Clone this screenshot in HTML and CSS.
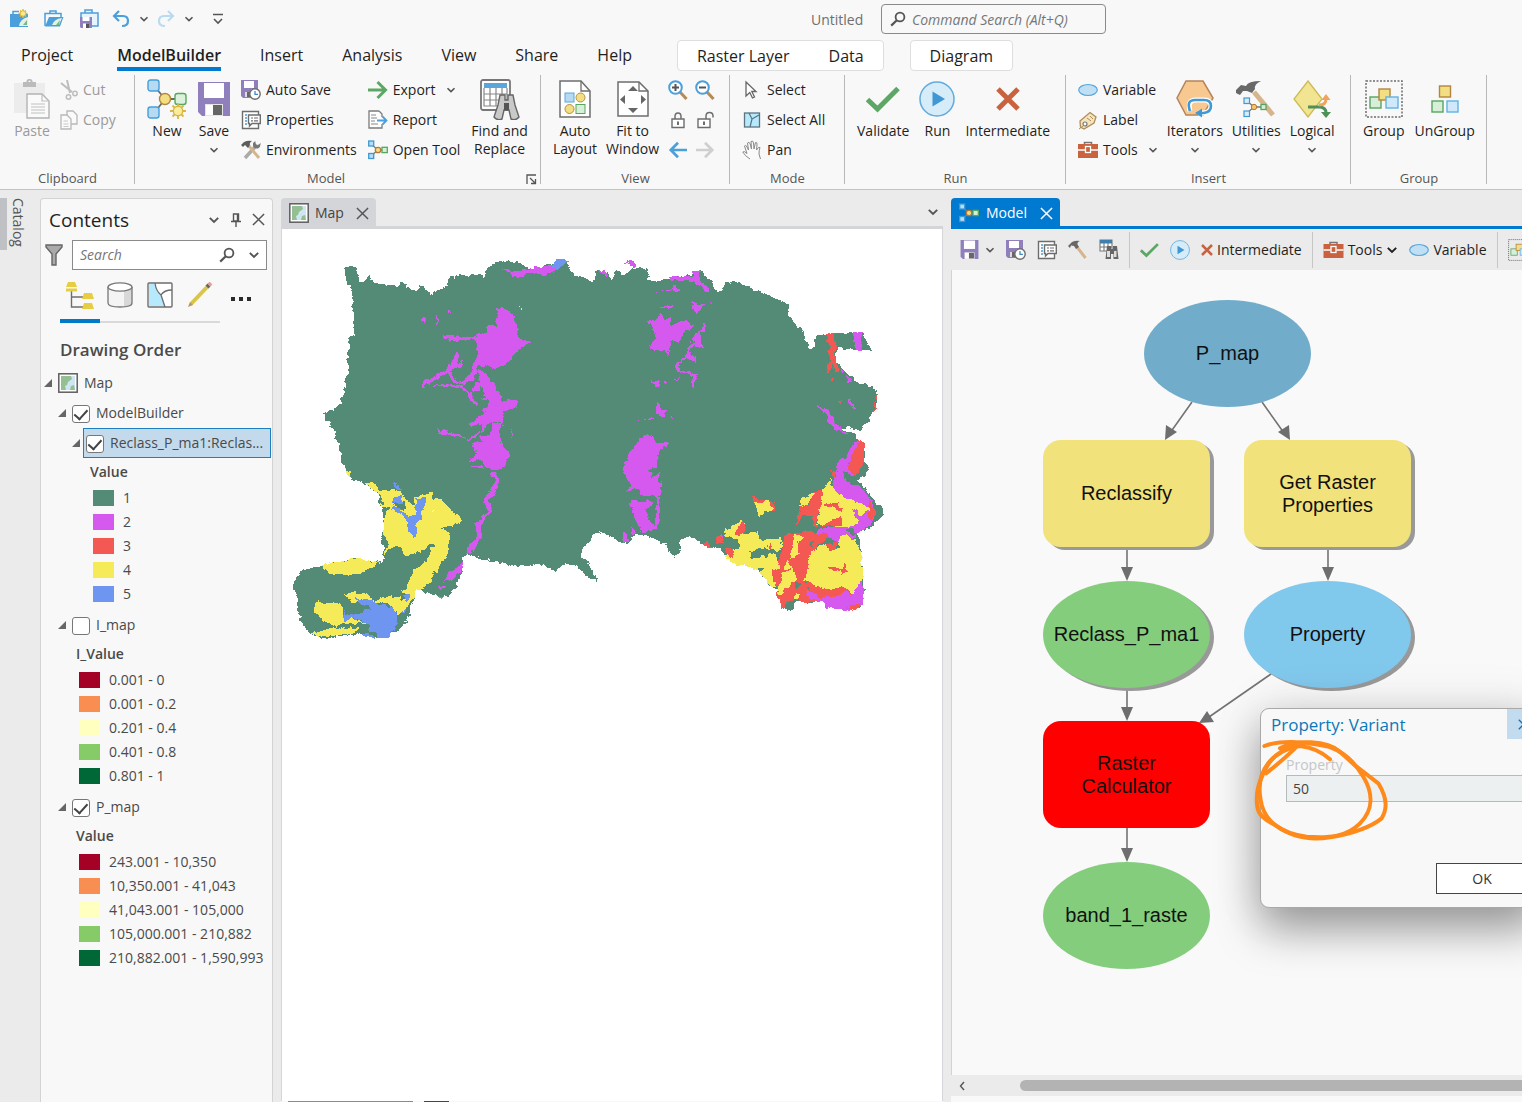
FILE: index.html
```html
<!DOCTYPE html>
<html lang="en">
<head>
<meta charset="utf-8">
<title>Untitled - ModelBuilder</title>
<link rel="stylesheet" href="styles.css">
</head>
<body>
<svg class="sprite" aria-hidden="true">
  <symbol id="chev" viewBox="0 0 10 10"><path d="M1.5 3.2 5 6.6 8.5 3.2" fill="none" stroke="currentColor" stroke-width="1.6"/></symbol>
  <symbol id="close" viewBox="0 0 14 14"><path d="M1 1 13 13M13 1 1 13" fill="none" stroke="currentColor" stroke-width="1.6"/></symbol>
  <symbol id="lens" viewBox="0 0 16 16"><circle cx="10" cy="6" r="4.4" fill="none" stroke="currentColor" stroke-width="1.8"/><path d="M6.8 9.2 1.2 14.6" stroke="currentColor" stroke-width="2.2"/></symbol>
  <symbol id="floppy" viewBox="0 0 32 34"><path d="M0 0H32V34H4L0 30Z" fill="#8f7fbc"/><path d="M6 1H26V16H6Z" fill="#fff"/><path d="M7 22H25V34H7Z" fill="#e4e4e4"/><path d="M8 23H15V33H8Z" fill="#fff"/><path d="M15 23H24V33H15Z" fill="#666"/></symbol>
  <symbol id="autosave" viewBox="0 0 20 20"><path d="M0 0H17V9H10V18H2L0 16Z" fill="#8f7fbc"/><path d="M3 1H13V8H3Z" fill="#fff"/><path d="M4 12H9V17H4Z" fill="#ddd"/><path d="M6 12H9V17H6Z" fill="#666"/><circle cx="14" cy="14" r="5.2" fill="#fff" stroke="#6d6d6d" stroke-width="1.4"/><path d="M14 11V14.4H17" fill="none" stroke="#3f8cc4" stroke-width="1.3"/></symbol>
  <symbol id="props" viewBox="0 0 20 20"><path d="M1.500 1.500H17.500V18.500H1.500Z" fill="#fff" stroke="#6d6d6d" stroke-width="1.400"/><path d="M4 5H6M4 8H6M4 11H6M4 14H6" stroke="#4b9bd0" stroke-width="1.400"/><path d="M7.500 5H19.300V13.500H11L8.500 16V13.500H7.500Z" fill="#fff" stroke="#6d6d6d" stroke-width="1.400"/><path d="M10 8H12M13 8H17M10 10.800H12M13 10.800H17" stroke="#6d6d6d" stroke-width="1.200"/></symbol>
  <symbol id="hammer" viewBox="0 0 20 20"><path d="M9 7 17.500 18" stroke="#d6b58d" stroke-width="3"/><path d="M0 6 4 2Q8 0 12 1 9 2 9.500 4.500L11 7 8 9 6 6 3 5.500 2 8Z" fill="#686868"/></symbol>
  <symbol id="env" viewBox="0 0 20 20"><path d="M4 18 14 7" stroke="#aaa" stroke-width="3.4"/><path d="M12 3 14.500 1Q14 4 16 5 18 5 19.500 3 20 7 17 8.500 13 9 12 6Z" fill="#777"/><path d="M8 6 18 18" stroke="#d6b58d" stroke-width="3"/><path d="M0 5 3 2Q7 0 11 1 8 3 9 5L7 8 4 5 2 7Z" fill="#5d5d5d"/></symbol>
  <symbol id="exportarrow" viewBox="0 0 20 20"><path d="M0 10H17M9.500 2 17.500 10 9.500 18" fill="none" stroke="#5ca765" stroke-width="3"/></symbol>
  <symbol id="report" viewBox="0 0 20 20"><path d="M11 1H1V18H14V14M11 1 14 4V7" fill="#fff" stroke="#7b7b7b" stroke-width="1.3"/><path d="M3 5H8M3 8H9M3 11H7M3 14H10" stroke="#888" stroke-width="1.2"/><path d="M9 10.500H18M14.500 6.500 18.500 10.500 14.500 14.500" fill="none" stroke="#4b9fdb" stroke-width="1.8"/></symbol>
  <symbol id="flow" viewBox="0 0 20 20"><path d="M3 4 10 10 3 16M10 10H16" fill="none" stroke="#777" stroke-width="1.3"/><rect x=".7" y="1" width="5" height="5" fill="#b9dcf4" stroke="#3e99d5" stroke-width="1.3"/><rect x=".7" y="13.500" width="5" height="5" fill="#b9dcf4" stroke="#3e99d5" stroke-width="1.3"/><circle cx="10" cy="10" r="2.700" fill="#f2df84" stroke="#b27a3c" stroke-width="1.300"/><rect x="14" y="7.300" width="5.300" height="5.300" fill="#d7efd8" stroke="#56a560" stroke-width="1.300"/></symbol>
  <symbol id="newmodel" viewBox="0 0 40 40"><path d="M8 8 18 20 8 33M18 20H30" fill="none" stroke="#6a6a6a" stroke-width="1.800"/><rect x="1" y="1" width="11" height="11" rx="2.500" fill="#b7daf3" stroke="#469fd9" stroke-width="1.400"/><rect x="1" y="28" width="11" height="11" rx="2.500" fill="#b7daf3" stroke="#469fd9" stroke-width="1.400"/><circle cx="18" cy="20" r="5.500" fill="#f2df84" stroke="#b5843f" stroke-width="1.400"/><rect x="28" y="14.500" width="11" height="11" rx="2.500" fill="#dcf1dc" stroke="#58a761" stroke-width="1.400"/><path d="M31 24V40M23 32H39M25.500 26.500 36.500 37.500M36.500 26.500 25.500 37.500" stroke="#d8b744" stroke-width="1.800"/><circle cx="31" cy="32" r="4.700" fill="#f9ec9b" stroke="#d8b744" stroke-width="1.400"/></symbol>
  <symbol id="paste" viewBox="0 0 36 40"><path d="M0 4H31V34H0Z" fill="#ececec"/><path d="M9 3H22V8H9Z" fill="#bbb"/><path d="M13 3Q15.500-2 18 3" fill="none" stroke="#bbb" stroke-width="2"/><path d="M13 15H28L35 22V39H13Z" fill="#fafafa" stroke="#b3b3b3" stroke-width="1.400"/><path d="M28 15V22H35M17 25H31M17 28H31M17 31H31M17 34H31" fill="none" stroke="#bfbfbf" stroke-width="1.200"/></symbol>
  <symbol id="cut" viewBox="0 0 18 20"><path d="M1 3 12 12M7 0 10 13" stroke="#bdbdbd" stroke-width="2"/><circle cx="15" cy="13.500" r="2.200" fill="none" stroke="#bdbdbd" stroke-width="1.500"/><circle cx="8.500" cy="17" r="2.200" fill="none" stroke="#bdbdbd" stroke-width="1.500"/></symbol>
  <symbol id="copy" viewBox="0 0 18 20"><path d="M7 1H13L17 5V14H7Z" fill="#fafafa" stroke="#b8b8b8" stroke-width="1.300"/><path d="M1 5H7L11 9V19H1Z" fill="#fafafa" stroke="#b8b8b8" stroke-width="1.300"/><path d="M3.500 11H8M3.500 14H8.500M3.500 16.500H8.500" stroke="#c8c8c8"/></symbol>
  <symbol id="find" viewBox="0 0 40 41"><rect x="1" y="1" width="29" height="30" rx="2" fill="#fff" stroke="#777" stroke-width="1.800"/><path d="M4 4H27V9H4Z" fill="#5aa6da"/><path d="M4 9V27H27V9M4 15H27M4 21H27M10 9V27M16 9V27M22 9V27" fill="none" stroke="#888" stroke-width="1.200"/><path d="M20 16H25V21H28V16H33L35 26 39 38Q36 42 31 40L29 31H24L22 40Q17 42 14 38L18 26Z" fill="#c9c9c9" stroke="#666" stroke-width="1.400"/><path d="M24 24H29V31H24Z" fill="#555"/></symbol>
  <symbol id="findsmall" viewBox="0 0 20 22"><path d="M1 1H13V12H1ZM1 4H13M1 8H13M5 4V12M9 4V12" fill="#fff" stroke="#777" stroke-width="1.100"/><path d="M1 1H13V4H1Z" fill="#3f7fae"/><path d="M8 7H12V10H14V7H18L19.500 20H14.500V15H12V20H6.500Z" fill="#666"/><path d="M8 12H11V18H8ZM15 12H17.500V18H15Z" fill="#ddd"/></symbol>
  <symbol id="autolayout" viewBox="0 0 32 38"><path d="M1 1H22L31 11V37H1Z" fill="#fff" stroke="#6d6d6d" stroke-width="1.500"/><path d="M22 1V11H31" fill="none" stroke="#6d6d6d" stroke-width="1.300"/><rect x="6" y="13" width="9" height="9" fill="#b7daf3" stroke="#5aa6da"/><circle cx="21.500" cy="17.500" r="4.500" fill="#f2df84" stroke="#b98f3e"/><circle cx="10.500" cy="29" r="4.500" fill="#f2df84" stroke="#b98f3e"/><rect x="17" y="24.500" width="9" height="9" fill="#d7efd8" stroke="#56a560"/></symbol>
  <symbol id="fit" viewBox="0 0 32 36"><path d="M1 1H22L31 10V35H1Z" fill="#fff" stroke="#6d6d6d" stroke-width="1.500"/><path d="M22 1V10H31" fill="none" stroke="#6d6d6d" stroke-width="1.300"/><path d="M16 5 21 10H11ZM16 32 21 27H11ZM3 18.500 8 14V23ZM29 18.500 24 14V23Z" fill="#666"/></symbol>
  <symbol id="zoomin" viewBox="0 0 20 20"><path d="M12 12 18.500 19" stroke="#b68a54" stroke-width="3"/><circle cx="7.500" cy="7.500" r="6.300" fill="#fff" stroke="#4b9fdb" stroke-width="2"/><path d="M4 7.500H11M7.500 4V11" stroke="#555" stroke-width="2"/></symbol>
  <symbol id="zoomout" viewBox="0 0 20 20"><path d="M12 12 18.500 19" stroke="#b68a54" stroke-width="3"/><circle cx="7.500" cy="7.500" r="6.300" fill="#fff" stroke="#4b9fdb" stroke-width="2"/><path d="M4 7.500H11" stroke="#555" stroke-width="2"/></symbol>
  <symbol id="lock" viewBox="0 0 20 20"><path d="M7 9V6.500Q7 3 10 3T13 6.500V9" fill="none" stroke="#6d6d6d" stroke-width="1.500"/><path d="M4 9H16V17.500H4Z" fill="#fff" stroke="#6d6d6d" stroke-width="1.400"/><path d="M10 11.500V15" stroke="#6d6d6d" stroke-width="2"/></symbol>
  <symbol id="unlock" viewBox="0 0 20 20"><path d="M11 9V6Q11 2.500 14.500 2.500T18 6V7.500" fill="none" stroke="#6d6d6d" stroke-width="1.500"/><path d="M3 9H15V17.500H3Z" fill="#fff" stroke="#6d6d6d" stroke-width="1.400"/><path d="M9 11.500V15" stroke="#6d6d6d" stroke-width="2"/></symbol>
  <symbol id="back" viewBox="0 0 20 20"><path d="M20 10H2M10 2 2 10 10 18" fill="none" stroke="#4b9fdb" stroke-width="3"/></symbol>
  <symbol id="fwd" viewBox="0 0 20 20"><path d="M0 10H18M10 2 18 10 10 18" fill="none" stroke="#cfcfcf" stroke-width="3"/></symbol>
  <symbol id="cursor" viewBox="0 0 20 20"><path d="M4 2 14 11.500H9.800L12.500 17 10.500 18 7.800 12.500 4 16Z" fill="#fff" stroke="#666" stroke-width="1.300"/></symbol>
  <symbol id="selectall" viewBox="0 0 20 20"><rect x="2.500" y="3" width="15" height="14" fill="#b5e9fb" stroke="#5b7480" stroke-width="1.300"/><path d="M7 3 10 9 8 17M10 9 17 5" fill="none" stroke="#5b7480" stroke-width="1.200"/></symbol>
  <symbol id="hand" viewBox="0 0 20 20"><path d="M8 19Q3 16 .8 12 2 10.500 5 13.500L2.500 6Q3.500 4 5 7L6.500 10 5.500 3Q7 1 8.200 4L9.500 9 9 1.500Q11 0 11.500 3L12 9 13.500 2.500Q15.500 2 15 5L14.500 10Q17 6 18 7.500 17 10 17 14L18.500 19" fill="#fafafa" stroke="#8a8a8a" stroke-width="1"/></symbol>
  <symbol id="tick" viewBox="0 0 34 28"><path d="M1.500 14.500 11.500 24 32 3.500" fill="none" stroke="#5ca765" stroke-width="5"/></symbol>
  <symbol id="run" viewBox="0 0 36 36"><circle cx="18" cy="18" r="17" fill="#d7ecf9" stroke="#62abdc" stroke-width="1.500"/><path d="M13.500 10.500 26 18 13.500 25.500Z" fill="#3f97d3"/></symbol>
  <symbol id="redx" viewBox="0 0 24 24"><path d="M2 2 22 22M22 2 2 22" stroke="#c9633f" stroke-width="5"/></symbol>
  <symbol id="variable" viewBox="0 0 20 20"><ellipse cx="10" cy="10" rx="9.300" ry="5.500" fill="#bfdff4" stroke="#5aa6da" stroke-width="1.200"/></symbol>
  <symbol id="label" viewBox="0 0 20 20"><path d="M2 11 12 2.500 18 7 16 13 6 19 2.500 17Z" fill="#f5e5be" stroke="#b08d5a" stroke-width="1.300"/><circle cx="7" cy="14" r="2" fill="#fff" stroke="#777" stroke-width="1.200"/><path d="M9 8 13 11M12 6 15 9M5 16 1 19" stroke="#b08d5a"/></symbol>
  <symbol id="tools" viewBox="0 0 20 20"><path d="M6.500 5V2.500H13.500V5" fill="none" stroke="#777" stroke-width="1.500"/><path d="M0 4H20V18H0Z" fill="#c9633f"/><path d="M0 10H7M13 10H20" stroke="#fff" stroke-width="1.400"/><rect x="7.500" y="6.500" width="5" height="6" fill="#c9633f" stroke="#fff" stroke-width="1.300"/></symbol>
  <symbol id="iterators" viewBox="0 0 38 38"><path d="M10 1H27L37 18 27 35H10L1 18Z" fill="#f8c891" stroke="#b5845a" stroke-width="1.500"/><path d="M14 31Q11 20 20 20H28Q35 20 35 26T28 33H22" fill="none" stroke="#fff" stroke-width="5"/><path d="M14 31Q10 20 19 20H28Q35 20 35 26T28 33H24" fill="none" stroke="#3e99d5" stroke-width="2.600"/><path d="M19 33 26 28.500V37.500Z" fill="#3e99d5"/></symbol>
  <symbol id="utilities" viewBox="0 0 40 38"><path d="M18 12 37 35" stroke="#d6b58d" stroke-width="5"/><path d="M0 10 5 5 10 6Q12 1 25 1 18 4 19 9L16 13 11 11 7 11 4 15 0 13Z" fill="#686868"/><path d="M11 21 18 27 11 33M18 27H26" fill="none" stroke="#777" stroke-width="1.300"/><rect x="8" y="18" width="5.500" height="5.500" fill="#d7ecf9" stroke="#3e99d5" stroke-width="1.200"/><rect x="8" y="31" width="5.500" height="5.500" fill="#d7ecf9" stroke="#3e99d5" stroke-width="1.200"/><circle cx="18" cy="27" r="2.700" fill="#f2c66b" stroke="#b27a3c"/><rect x="25" y="24.500" width="5" height="5" fill="#d7efd8" stroke="#56a560" stroke-width="1.300"/></symbol>
  <symbol id="logical" viewBox="0 0 38 38"><path d="M15 1 29 19 15 37 1 19Z" fill="#f2e592" stroke="#cdbb55" stroke-width="1.300"/><path d="M15 27H26Q33 27 33 33" fill="none" stroke="#4f8f58" stroke-width="3"/><path d="M28 32H38L33 38Z" fill="#4f8f58"/><path d="M26 25Q33 25 33 19" fill="none" stroke="#f0a35c" stroke-width="3"/><path d="M28.500 20 33 14 37.500 20Z" fill="#f0a35c"/></symbol>
  <symbol id="group" viewBox="0 0 38 38"><rect x="1" y="1" width="36" height="36" fill="none" stroke="#6d6d6d" stroke-width="1.500" stroke-dasharray="2 1.500"/><rect x="5" y="17" width="11" height="11" fill="#d7efd8" stroke="#56a560" stroke-width="1.400"/><rect x="14" y="9" width="11" height="11" fill="#f2df84" stroke="#b5843f" stroke-width="1.400"/><rect x="21" y="17" width="12" height="11" fill="#cfe9fa" stroke="#62b2e0" stroke-width="1.400"/></symbol>
  <symbol id="ungroup" viewBox="0 0 28 28"><rect x="8.500" y="1" width="11" height="11" fill="#f2df84" stroke="#b5843f" stroke-width="1.400"/><rect x="1" y="16" width="11" height="11" fill="#d7efd8" stroke="#56a560" stroke-width="1.400"/><rect x="16" y="16" width="11" height="11" fill="#cfe9fa" stroke="#62b2e0" stroke-width="1.400"/></symbol>
  <symbol id="mapicon" viewBox="0 0 20 20"><rect x=".8" y=".8" width="18.400" height="18.400" fill="#fff" stroke="#5e5e5e" stroke-width="1.500"/><path d="M3 3H17V17H3Z" fill="#cfe6f2"/><path d="M3 3H13L14 6 10 9 9 12 7 13 8 17H3ZM13 13 16 12 17 17H12Z" fill="#93bf93"/></symbol>
  <symbol id="funnel" viewBox="0 0 18 22"><path d="M1 1H17V3L11 10V21H7V10L1 3Z" fill="#aaa" stroke="#666" stroke-width="1.400"/></symbol>
</svg>

<header class="titlebar">
  <div class="qat">
    <button class="icon-btn" aria-label="New project"><svg width="20" height="20" viewBox="0 0 20 20"><path d="M4 5V2.500H10" fill="none" stroke="#4b9fdb" stroke-width="1.500"/><path d="M1 5H19V18H1Z" fill="#4b9fdb"/><path d="M10 17Q11 10 19 8V17Z" fill="#e3f2e3"/><path d="M14 16 18 11V16Z" fill="#76b982"/><path d="M14 0V9M9.500 4.500H18.500M11 1.500 17 7.500M17 1.500 11 7.500" stroke="#dfb73b" stroke-width="1.400"/><circle cx="14" cy="4.500" r="2.800" fill="#f9e88c" stroke="#dfb73b"/></svg></button>
    <button class="icon-btn" aria-label="Open project"><svg width="20" height="20" viewBox="0 0 20 20"><path d="M6 4V2H12V4M1 17V4.500H17V8" fill="none" stroke="#4b9fdb" stroke-width="1.500"/><path d="M1 17.500 5 8H19.500L16 17.500Z" fill="#4b9fdb"/><path d="M8 16Q10 10 18 9L15 16Z" fill="#e3f2e3"/><path d="M12 16 16 11 15 16Z" fill="#76b982"/></svg></button>
    <button class="icon-btn" aria-label="Save project"><svg width="20" height="20" viewBox="0 0 20 20"><path d="M6 4V1H13V4M2 9V4H19V17H13" fill="#e8f4fb" stroke="#4b9fdb" stroke-width="1.500"/><path d="M1 8H13V19H2L1 18Z" fill="#8f7fbc"/><path d="M3.500 8H10.500V12H3.500ZM4 14.500H10V19H4Z" fill="#fff"/><path d="M7 14.500H10V19H7Z" fill="#555"/></svg></button>
    <button class="icon-btn undo" aria-label="Undo"><svg width="18" height="18" viewBox="0 0 18 18"><path d="M7 1 2 6 7 11M2 6H11Q16 6 16 11T10 16" fill="none" stroke="#4b9fdb" stroke-width="2.200"/></svg></button>
    <button class="icon-btn" aria-label="Undo list"><svg width="10" height="10"><use href="#chev"/></svg></button>
    <button class="icon-btn undo" aria-label="Redo"><svg width="18" height="18" viewBox="0 0 18 18"><path d="M11 1 16 6 11 11M16 6H7Q2 6 2 11T8 16" fill="none" stroke="#b9dbf0" stroke-width="2.200"/></svg></button>
    <button class="icon-btn" aria-label="Redo list"><svg width="10" height="10"><use href="#chev"/></svg></button>
    <button class="icon-btn more" aria-label="Customize toolbar"><svg width="12" height="12" viewBox="0 0 12 12"><path d="M1 1.500H11M2 6 6 10 10 6" fill="none" stroke="currentColor" stroke-width="1.600"/></svg></button>
  </div>
  <span class="doc-title">Untitled</span>
  <label class="command-search"><svg width="16" height="16"><use href="#lens"/></svg><input type="text" placeholder="Command Search (Alt+Q)" aria-label="Command Search"></label>
</header>

<nav class="tabs">
  <button class="tab">Project</button>
  <button class="tab active">ModelBuilder</button>
  <button class="tab">Insert</button>
  <button class="tab">Analysis</button>
  <button class="tab">View</button>
  <button class="tab">Share</button>
  <button class="tab">Help</button>
  <div class="context-tabs"><button class="tab">Raster Layer</button><button class="tab">Data</button></div>
  <div class="context-tabs"><button class="tab">Diagram</button></div>
</nav>

<section class="ribbon">
  <div class="group g-clipboard">
    <div class="cmds">
      <button class="big" disabled><span class="ico"><svg width="36" height="40"><use href="#paste"/></svg></span>Paste</button>
      <div class="stack">
        <button class="small" disabled><svg width="18" height="20"><use href="#cut"/></svg>Cut</button>
        <button class="small" disabled><svg width="18" height="20"><use href="#copy"/></svg>Copy</button>
      </div>
    </div>
    <div class="group-name">Clipboard</div>
  </div>
  <div class="group g-model">
    <div class="cmds">
      <button class="big"><span class="ico"><svg width="40" height="40"><use href="#newmodel"/></svg></span>New</button>
      <button class="big"><span class="ico"><svg width="32" height="34"><use href="#floppy"/></svg></span>Save<svg class="drop" width="10" height="10"><use href="#chev"/></svg></button>
      <div class="stack">
        <button class="small"><svg width="20" height="20"><use href="#autosave"/></svg>Auto Save</button>
        <button class="small"><svg width="20" height="20"><use href="#props"/></svg>Properties</button>
        <button class="small"><svg width="20" height="20"><use href="#env"/></svg>Environments</button>
      </div>
      <div class="stack">
        <button class="small"><svg width="20" height="20"><use href="#exportarrow"/></svg>Export<svg class="side" width="10" height="10"><use href="#chev"/></svg></button>
        <button class="small"><svg width="20" height="20"><use href="#report"/></svg>Report</button>
        <button class="small"><svg width="20" height="20"><use href="#flow"/></svg>Open Tool</button>
      </div>
      <button class="big"><span class="ico"><svg width="40" height="41"><use href="#find"/></svg></span>Find and<br>Replace</button>
    </div>
    <div class="group-name">Model</div>
    <button class="launcher" aria-label="Model options"><svg width="11" height="11" viewBox="0 0 11 11"><path d="M1 10V1H10M4 4 9 9M9.500 5V9.500H5" fill="none" stroke="#555" stroke-width="1.300"/></svg></button>
  </div>
  <div class="group g-view">
    <div class="cmds">
      <button class="big"><span class="ico"><svg width="32" height="38"><use href="#autolayout"/></svg></span>Auto<br>Layout</button>
      <button class="big"><span class="ico"><svg width="32" height="36"><use href="#fit"/></svg></span>Fit to<br>Window</button>
      <div class="icon-grid">
        <button class="icon-btn" aria-label="Zoom in"><svg width="20" height="20"><use href="#zoomin"/></svg></button>
        <button class="icon-btn" aria-label="Zoom out"><svg width="20" height="20"><use href="#zoomout"/></svg></button>
        <button class="icon-btn" aria-label="Lock"><svg width="20" height="20"><use href="#lock"/></svg></button>
        <button class="icon-btn" aria-label="Unlock"><svg width="20" height="20"><use href="#unlock"/></svg></button>
        <button class="icon-btn" aria-label="Previous extent"><svg width="20" height="18"><use href="#back"/></svg></button>
        <button class="icon-btn" aria-label="Next extent"><svg width="20" height="18"><use href="#fwd"/></svg></button>
      </div>
    </div>
    <div class="group-name">View</div>
  </div>
  <div class="group g-mode">
    <div class="cmds">
      <div class="stack">
        <button class="small"><svg width="20" height="20"><use href="#cursor"/></svg>Select</button>
        <button class="small"><svg width="20" height="20"><use href="#selectall"/></svg>Select All</button>
        <button class="small"><svg width="20" height="20"><use href="#hand"/></svg>Pan</button>
      </div>
    </div>
    <div class="group-name">Mode</div>
  </div>
  <div class="group g-run">
    <div class="cmds">
      <button class="big"><span class="ico"><svg width="34" height="28"><use href="#tick"/></svg></span>Validate</button>
      <button class="big"><span class="ico"><svg width="36" height="36"><use href="#run"/></svg></span>Run</button>
      <button class="big"><span class="ico"><svg width="24" height="24"><use href="#redx"/></svg></span>Intermediate</button>
    </div>
    <div class="group-name">Run</div>
  </div>
  <div class="group g-insert">
    <div class="cmds">
      <div class="stack">
        <button class="small"><svg width="20" height="20"><use href="#variable"/></svg>Variable</button>
        <button class="small"><svg width="20" height="20"><use href="#label"/></svg>Label</button>
        <button class="small"><svg width="20" height="20"><use href="#tools"/></svg>Tools<svg class="side" width="10" height="10"><use href="#chev"/></svg></button>
      </div>
      <button class="big"><span class="ico"><svg width="38" height="38"><use href="#iterators"/></svg></span>Iterators<svg class="drop" width="10" height="10"><use href="#chev"/></svg></button>
      <button class="big"><span class="ico"><svg width="40" height="38"><use href="#utilities"/></svg></span>Utilities<svg class="drop" width="10" height="10"><use href="#chev"/></svg></button>
      <button class="big"><span class="ico"><svg width="38" height="38"><use href="#logical"/></svg></span>Logical<svg class="drop" width="10" height="10"><use href="#chev"/></svg></button>
    </div>
    <div class="group-name">Insert</div>
  </div>
  <div class="group g-group">
    <div class="cmds">
      <button class="big"><span class="ico"><svg width="38" height="38"><use href="#group"/></svg></span>Group</button>
      <button class="big"><span class="ico"><svg width="28" height="28"><use href="#ungroup"/></svg></span>UnGroup</button>
    </div>
    <div class="group-name">Group</div>
  </div>
</section>

<main class="workspace">
  <aside class="dock"><button class="dock-tab">Catalog</button></aside>

  <section class="contents">
    <header class="pane-title">
      <h2>Contents</h2>
      <button class="icon-btn" aria-label="Pane menu"><svg width="12" height="12"><use href="#chev"/></svg></button>
      <button class="icon-btn" aria-label="Pin"><svg width="10" height="14" viewBox="0 0 10 14"><path d="M2.500 1H7.500V8H2.500ZM0 8.500H10M5 8.500V14M6.500 1V8" fill="none" stroke="currentColor" stroke-width="1.400"/></svg></button>
      <button class="icon-btn" aria-label="Close pane"><svg width="13" height="13"><use href="#close"/></svg></button>
    </header>
    <div class="search-row">
      <svg width="18" height="22"><use href="#funnel"/></svg>
      <label class="search"><input type="text" placeholder="Search" aria-label="Search contents"><svg width="16" height="16"><use href="#lens"/></svg><svg width="12" height="12"><use href="#chev"/></svg></label>
    </div>
    <div class="list-tabs">
      <button class="list-tab on" aria-label="List by drawing order"><svg width="28" height="28" viewBox="0 0 28 28"><path d="M5.500 8V25H17M5.500 15H17" fill="none" stroke="#6d6d6d" stroke-width="1.400"/><path d="M2 0H9L11 5H0ZM0 6.500H11V9.500H0ZM18 11H26L28 17H16ZM18 21H26L28 27H16Z" fill="#e6cd43"/></svg></button>
      <button class="list-tab" aria-label="List by data source"><svg width="26" height="26" viewBox="0 0 26 26"><path d="M1 5V21Q1 25 13 25T25 21V5" fill="#f4f4f4"/><path d="M17 9Q25 8 25 5V21Q25 24 17 25Z" fill="#d8d8d8"/><path d="M1 5V21Q1 25 13 25T25 21V5" fill="none" stroke="#777" stroke-width="1.300"/><ellipse cx="13" cy="5" rx="12" ry="4.200" fill="#fff" stroke="#777" stroke-width="1.300"/></svg></button>
      <button class="list-tab" aria-label="List by selection"><svg width="26" height="26" viewBox="0 0 26 26"><rect x="1" y="1" width="24" height="24" rx="1" fill="#fff" stroke="#6d6d6d" stroke-width="1.400"/><path d="M2 2H8Q9 9 14 13L18 24H2Z" fill="#b5e9fb"/><path d="M8 1Q9 9 14 13L18 25M14 13Q17 8 25 8" fill="none" stroke="#6d6d6d" stroke-width="1.300"/></svg></button>
      <button class="list-tab" aria-label="List by editing"><svg width="26" height="26" viewBox="0 0 26 26"><path d="M4 22 21 4" stroke="#dbc548" stroke-width="4"/><path d="M1 25 3 20 6 23Z" fill="#b49468"/><path d="M20 5 22 3" stroke="#666" stroke-width="4"/><path d="M22 3 24 1" stroke="#e99f8f" stroke-width="4"/></svg></button>
      <button class="list-more" aria-label="More lists"><svg width="20" height="4" viewBox="0 0 20 4"><path d="M0 0H4V4H0ZM8 0H12V4H8ZM16 0H20V4H16Z" fill="#2b2b2b"/></svg></button>
    </div>
    <h3>Drawing Order</h3>
    <ul class="tree">
      <li class="node lvl0"><span class="twist"></span><svg width="20" height="20"><use href="#mapicon"/></svg>Map</li>
      <li class="node lvl1"><span class="twist"></span><label><input type="checkbox" checked>ModelBuilder</label></li>
      <li class="node lvl2"><span class="twist"></span><label class="selected"><input type="checkbox" checked>Reclass_P_ma1:Reclas...</label></li>
      <li class="legend deep">
        <h4>Value</h4>
        <p><i class="sw c1"></i>1</p><p><i class="sw c2"></i>2</p><p><i class="sw c3"></i>3</p><p><i class="sw c4"></i>4</p><p><i class="sw c5"></i>5</p>
      </li>
      <li class="node lvl1 layer"><span class="twist"></span><label><input type="checkbox">I_map</label></li>
      <li class="legend">
        <h4>I_Value</h4>
        <p><i class="sw r1"></i>0.001 - 0</p><p><i class="sw r2"></i>0.001 - 0.2</p><p><i class="sw r3"></i>0.201 - 0.4</p><p><i class="sw r4"></i>0.401 - 0.8</p><p><i class="sw r5"></i>0.801 - 1</p>
      </li>
      <li class="node lvl1 layer"><span class="twist"></span><label><input type="checkbox" checked>P_map</label></li>
      <li class="legend">
        <h4>Value</h4>
        <p><i class="sw r1"></i>243.001 - 10,350</p><p><i class="sw r2"></i>10,350.001 - 41,043</p><p><i class="sw r3"></i>41,043.001 - 105,000</p><p><i class="sw r4"></i>105,000.001 - 210,882</p><p><i class="sw r5"></i>210,882.001 - 1,590,993</p>
      </li>
    </ul>
  </section>

  <section class="map-pane">
    <div class="doc-tabs">
      <div class="doc-tab"><svg width="20" height="20"><use href="#mapicon"/></svg>Map<button class="icon-btn" aria-label="Close map"><svg width="13" height="13"><use href="#close"/></svg></button></div>
      <button class="icon-btn" aria-label="Open views"><svg width="12" height="12"><use href="#chev"/></svg></button>
    </div>
    <div class="map-view">
      <svg class="raster" width="595" height="388" viewBox="290 255 595 388" shape-rendering="crispEdges" role="img" aria-label="Reclassified raster">
        <filter id="rough" x="0" y="0" width="1" height="1" color-interpolation-filters="sRGB"><feTurbulence type="fractalNoise" baseFrequency=".14" numOctaves="3" seed="4"/><feDisplacementMap in="SourceGraphic" scale="7" xChannelSelector="R" yChannelSelector="G"/></filter>
        <g filter="url(#rough)">
        <path fill="none" d="M290 255H885V643H290Z"/>
        <path fill="#548b77" d="M344 268 349 265 356 270 360 279 365 281 369 277 375 282 387 285 399 286 401 282 405 283 407 288 417 290 419 285 424 287 427 291 432 294 438 290 447 287 450 276 457 277 472 274 484 277 486 269 497 262 507 260 520 263 528 268 543 267 558 262 566 263 570 270 573 274 575 276 587 278 593 282 596 271 608 272 612 281 615 272 627 273 632 268 648 268 649 281 660 280 670 278 683 275 695 273 700 269 707 278 715 289 723 292 726 283 733 282 747 286 767 296 788 303 789 317 802 330 808 345 812 350 816 339 822 333 862 333 872 351 837 348 836 360 842 368 853 379 876 389 877 403 868 423 858 431 850 427 843 428 844 431 853 433 864 442 865 460 869 470 867 475 858 480 870 495 880 506 882 514 875 525 857 533 860 552 863 567 863 580 864 597 860 608 847 610 830 608 817 600 810 603 805 599 793 603 790 610 782 608 777 590 768 585 760 570 730 563 727 555 718 547 708 547 700 542 690 537 682 540 678 554 674 557 668 550 663 542 658 538 640 535 633 535 628 545 623 544 615 539 603 533 592 535 592 542 582 548 582 557 593 570 598 583 590 578 578 567 565 564 555 572 547 568 540 563 530 566 493 563 487 560 477 557 467 553 463 557 462 570 457 585 450 594 440 598 427 592 417 588 413 603 407 620 397 632 383 638 360 633 340 636 322 639 310 633 301 623 297 603 293 587 295 577 305 570 320 566 353 558 382 562 384 550 380 537 384 527 382 510 378 493 363 483 350 477 343 467 340 450 335 433 323 413 335 409 341 400 343 397 348 370 349 347 348 338 354 335 354 310 352 293 348 280Z"/>
        <g transform="translate(280 190) scale(.3333)">
          <path fill="#d559ee" d="M668 234 690 242 712 245 770 230 800 232 830 228 835 238 790 255 745 248 712 266 690 250ZM652 357 685 360 690 372 705 380 710 420 715 440 755 457 730 470 715 478 695 500 690 515 645 538 620 522 595 530 580 565 550 585 520 575 505 550 510 545 535 575 555 570 575 550 590 490 595 465 575 450 510 455 482 430 500 432 540 440 580 440 600 430 622 430 622 410 652 405 645 390 655 385ZM425 593 435 575 505 535 530 487 540 492 530 520 550 510 540 530 500 550 450 580ZM455 588 500 580 550 590 575 610 590 645 575 640 560 605 540 598 500 590ZM595 540 610 545 645 580 658 605 665 630 712 635 708 655 680 660 665 700 600 700 620 650 625 630 600 628 615 620 600 580ZM422 390 440 380 435 398ZM468 378 475 380 474 402 470 402ZM580 580 598 575 600 600 575 605ZM505 366 515 366 515 370 505 370ZM620 380 627 374 625 384Z"/>
          <path fill="#6e96f0" d="M808 230 830 210 866 212 850 225 835 238Z"/><path fill="#f5ea58" d="M720 347H723V350H720ZM720 354H723V364H720Z"/>
        </g>
        <g transform="translate(280 400) scale(.3333)">
          <path fill="#d559ee" d="M570 0 590 20 580 0ZM625 0H712L700 28 670 35 640 65 610 60 575 80 565 78 590 55 620 40ZM635 70 660 72 662 125 690 165 675 195 650 210 620 200 590 175 560 180 590 165 580 130 605 125 600 110 635 105ZM468 78 475 90 510 92 545 110 560 118 605 85 610 65 628 62 620 80 585 108 560 122 530 108 475 100ZM628 218 650 218 658 240 650 275 625 300 637 335 605 370 608 405 590 430 575 455 555 460 575 430 590 400 588 370 625 335 610 298 635 265 645 240ZM548 490 545 510 515 540 490 548 510 515ZM478 560 498 560 495 570 480 570ZM475 590 495 592 485 597ZM665 75 672 75 672 80 665 80ZM690 85 700 100 690 115 696 100ZM575 195 610 200 612 207 575 200Z"/>
          <path fill="#f5ea58" d="M250 248 285 250 300 270 360 270 372 292 398 315 402 295 455 278 462 298 485 300 542 358 540 372 485 385 512 400 505 420 508 445 485 485 450 545 425 570 412 565 405 590 380 625 350 650 330 610 285 605 320 590 385 600 365 570 385 565 385 545 400 510 445 480 450 445 465 440 460 432 410 462 375 468 368 440 340 438 310 470 328 428 308 405 312 350 330 320 305 320 297 280ZM122 497 220 475 300 487 255 515 200 528 150 522ZM195 580H265L285 603 240 595 220 612ZM105 605 185 615 188 645 215 655 260 675 195 670 170 680 130 665 105 640ZM95 700 150 685 240 683 210 700 130 712ZM190 203 215 218 208 230Z"/>
          <path fill="#6e96f0" d="M340 290 370 292 365 305 340 318ZM335 245 365 265 355 268ZM412 298 435 295 435 320 422 340 425 350 412 375 412 400 400 412 382 400 385 370 360 340 335 325 345 320 395 350 412 338 405 325ZM220 595 280 600 300 612 335 620 352 655 340 690 320 715 300 715 265 690 270 675 215 655 195 662 190 630 265 625ZM365 590 388 585 385 605ZM383 617 375 635 360 640ZM240 700 265 698 290 715 250 708Z"/>
          <path fill="#548b77" d="M190 625 235 605 268 625 235 640 200 648ZM298 295 310 295 310 312 298 308ZM345 312 375 302 375 325 362 332Z"/>
          <path fill="#fff" d="M460 332 476 326V329L462 334ZM777 326H780V329H777ZM792 315H795V318H792ZM807 302H810V305H807Z"/>
        </g>
        <g transform="translate(560 240) scale(.3333)">
          <path fill="#d559ee" d="M325 113 385 105 400 105 400 92 420 88 418 110 445 150 445 162 430 145 400 125 330 122ZM192 68 210 60 232 75 228 82 210 72ZM115 92 130 90 148 108 140 110ZM275 160 330 150 345 138 368 158 345 150ZM298 203 345 195 330 210ZM393 187 440 195 465 185 430 200 415 218 400 212ZM262 240 285 240 300 220 315 240 330 235 335 255 375 240 405 258 380 270 365 285 360 310 335 300 320 355 315 330 270 330 275 305 290 290 278 265ZM433 248 440 270 422 275 425 305 435 325 400 320 385 335 405 350 410 370 380 355 358 370 355 388 418 408 400 440 390 430 400 412 348 392 350 370 380 345 380 330 400 310 395 295 415 280ZM272 420 295 425 302 442 285 440ZM297 475 302 510 318 510 315 530 285 520 290 495ZM318 425 323 425 322 445ZM240 595 265 585 282 595 285 610 322 610 318 622 298 630 290 680 265 690 275 715 300 695 302 740 292 770 240 765 235 745 195 758 215 735 187 685 200 655 215 635ZM205 782 278 785 275 800 255 805 272 850 295 865 240 875 245 865 225 840 215 800ZM293 740H300L295 860H285ZM190 880 205 885 205 910 190 910ZM210 855 228 880 215 885ZM878 278 905 280 908 332 890 332ZM840 382 852 395 845 400ZM862 405 880 428 862 425ZM865 472 885 508 870 500ZM765 498 805 508 820 545 862 582 825 570 800 545 798 520ZM232 542 270 535 285 540ZM337 525 342 545 338 540ZM342 418 368 412 350 420Z"/>
          <path fill="#f35853" d="M795 275 818 278 832 325 825 335 838 400 825 395 815 370 805 402 798 398 812 345ZM951 460 948 500 925 552 940 510ZM838 484H845V495H840ZM816 415H821V422H816Z"/>
        </g>
        <g transform="translate(680 400) scale(.3333)">
          <path fill="#d559ee" d="M535 118 545 130 505 190 520 228 490 215 495 245 540 258 575 300 590 340 575 370 530 400 510 432 470 425 410 400 412 385 500 375 490 290 455 272 470 200ZM120 405 135 408 130 418Z"/>
          <path fill="#f35853" d="M540 116 553 130 553 185 525 230 503 200ZM568 296 590 340 575 362 562 350ZM450 215 467 212 460 230ZM430 268 400 275 390 310 360 318 350 370 365 370 370 345 385 345 412 385ZM218 290 285 310 282 335 230 330ZM105 410 120 405 132 425 112 432ZM65 425 85 425 95 440 80 440ZM315 405 385 395 420 400 440 395 445 415 410 440 400 450 370 545 395 575 440 600 390 605 345 600 330 620 305 625 290 570 275 510 300 470ZM445 270 455 268 495 295 470 292Z"/>
          <path fill="#f5ea58" d="M450 238 458 265 490 290 560 315 570 330 535 350 535 375 490 382 415 375 430 268ZM365 300 390 278 405 282 385 310 360 322ZM228 308 262 302 278 325 265 335 240 345 228 330ZM140 390 180 360 195 375 190 400 235 400 240 420 300 415 310 445 285 460 300 500 280 560 265 555 240 510 150 490 140 465 170 425 138 408ZM345 400 372 410 355 425 380 450 345 470 328 480ZM322 480 340 510 350 540 300 582 290 575 315 500ZM400 450 440 430 450 455 480 440 480 405 505 408 525 420 545 470 550 530 525 580 440 570 370 545ZM348 585 358 580 358 598 348 598Z"/>
          <path fill="#f35853" d="M165 405 185 360 200 385 180 412ZM135 440 155 440 160 465 150 475ZM255 440 275 425 270 445ZM430 315 470 308 488 325 485 335 465 322 432 320ZM485 352 485 378 418 378ZM440 503 485 503 490 495 503 512 490 525 485 515 445 510ZM370 542 430 565 495 565 525 585 440 600 400 580ZM440 430 480 425 460 455 450 452ZM275 510 312 500 290 565ZM312 510 340 516 312 516ZM355 430 390 425 395 460 350 462Z"/>
          <path fill="#d559ee" d="M380 565 430 598 500 575 520 585 545 540 553 590 540 622 500 630 450 625 410 600 380 590ZM515 322 545 345 565 340 550 360 530 350Z"/>
          <path fill="#f35853" d="M500 622 545 612 525 632Z"/>
          <path fill="#548b77" d="M205 455 240 445 290 450 290 462 215 475ZM135 420 175 420 178 445 160 450ZM237 500 250 500 247 515 240 515ZM330 605 355 600 335 630 305 628ZM345 550 365 545 355 570 345 565ZM368 345 390 345 405 372 380 378 355 370ZM500 385 515 385 530 400 510 402ZM360 372 400 380 405 395 350 388ZM388 425 400 418 398 440 390 435Z"/>
        </g>
        </g>
      </svg>
    </div>
    <footer class="map-status"><span class="scale-edge"></span><span class="tool-edge"></span></footer>
  </section>

  <section class="model-pane">
    <div class="doc-tabs">
      <div class="doc-tab"><svg width="20" height="20"><use href="#flow"/></svg>Model<button class="icon-btn" aria-label="Close model"><svg width="13" height="13"><use href="#close"/></svg></button></div>
    </div>
    <div class="toolbar">
      <button class="icon-btn" aria-label="Save"><svg width="19" height="19"><use href="#floppy"/></svg><svg width="10" height="10"><use href="#chev"/></svg></button>
      <button class="icon-btn" aria-label="Auto save"><svg width="20" height="20"><use href="#autosave"/></svg></button>
      <button class="icon-btn" aria-label="Properties"><svg width="20" height="20"><use href="#props"/></svg></button>
      <button class="icon-btn" aria-label="Environments"><svg width="20" height="20"><use href="#hammer"/></svg></button>
      <button class="icon-btn" aria-label="Find and replace"><svg width="20" height="22"><use href="#findsmall"/></svg></button>
      <span class="bar"></span>
      <button class="icon-btn" aria-label="Validate"><svg width="19" height="16"><use href="#tick"/></svg></button>
      <button class="icon-btn" aria-label="Run"><svg width="20" height="20"><use href="#run"/></svg></button>
      <button class="text-btn"><svg width="12" height="12"><use href="#redx"/></svg>Intermediate</button>
      <span class="bar"></span>
      <button class="text-btn"><svg width="21" height="20"><use href="#tools"/></svg>Tools<svg width="12" height="12"><use href="#chev"/></svg></button>
      <button class="text-btn"><svg width="20" height="20"><use href="#variable"/></svg>Variable</button>
      <span class="bar"></span>
      <button class="icon-btn" aria-label="Group"><svg width="22" height="22"><use href="#group"/></svg></button>
    </div>
    <div class="canvas">
      <svg class="edges" width="571" height="700" viewBox="0 0 571 700">
        <g stroke="#737373" stroke-width="1.600" fill="#6e6e6e">
          <path d="M240 132 218 163M310 132 332 163M175 280V300M376 280V300M175 420V440M319 404 257 447M175 557V580"/>
        </g>
        <g fill="#6e6e6e"><path d="M213 170 214 155 225 162ZM338 170 326 162 337 155ZM175 311 169 297H181ZM376 311 370 297H382ZM175 451 169 437H181ZM175 592 169 578H181ZM247 453 255 441 262 452Z"/></g>
      </svg>
      <div class="mnode oval blue n-pmap">P_map</div>
      <div class="mnode box n-reclassify shadow">Reclassify</div>
      <div class="mnode box n-getprops shadow">Get Raster<br>Properties</div>
      <div class="mnode oval green n-reclass shadow">Reclass_P_ma1</div>
      <div class="mnode oval sky n-property shadow">Property</div>
      <div class="mnode box red n-calc">Raster<br>Calculator</div>
      <div class="mnode oval green n-band">band_1_raste</div>
      <div class="dialog" role="dialog" aria-labelledby="dlg-title">
        <header><h2 id="dlg-title">Property: Variant</h2><button class="dlg-close" aria-label="Close"><svg width="11" height="11"><use href="#close"/></svg></button></header>
        <div class="field"><label for="prop">Property</label><input id="prop" type="text" value="50" readonly></div>
        <div class="actions"><button class="ok">OK</button></div>
      </div>
      <svg class="scribble" width="140" height="110" viewBox="690 225 420 330" fill="none" stroke="#fe8a1c" stroke-width="12" stroke-linecap="round"><path d="M733 258C780 240 850 245 900 255C960 262 1000 300 1030 350C1060 400 1060 450 1020 490C980 530 930 535 860 530C780 520 730 480 722 420C705 330 760 270 840 258C880 262 910 280 930 298"/><path d="M738 340Q780 308 825 265"/><path d="M780 265C830 238 920 240 960 275L1000 312 1075 370C1105 420 1100 450 1085 475C1040 512 970 525 930 532C880 540 820 536 765 495C735 480 715 465 712 440C706 400 715 370 735 330 750 300 765 280 830 252"/></svg>
    </div>
    <div class="scrollbar"><button class="icon-btn" aria-label="Scroll left"><svg width="6" height="10" viewBox="0 0 6 10"><path d="M5 1 1.500 5 5 9" fill="none" stroke="#555" stroke-width="1.400"/></svg></button><span class="thumb"></span></div>
  </section>
</main>
</body>
</html>
```

FILE: styles.css
```css
* { box-sizing: border-box; }
body {
  margin: 0;
  min-height: 100vh;
  display: flex;
  flex-direction: column;
  overflow: hidden;
  background: #f8f8f8;
  color: #1f1f1f;
  font: 14px/18px "Open Sans", "Noto Sans", sans-serif;
}
button, input { font: inherit; color: inherit; }
button { border: 0; padding: 0; margin: 0; background: none; white-space: nowrap; }
h2, h3, h4, p, ul { margin: 0; padding: 0; }
svg { display: block; flex: none; }
.sprite { position: absolute; width: 0; height: 0; }
.icon-btn { display: flex; align-items: center; flex: none; color: #555; }

/* title bar */
.titlebar { display: flex; align-items: center; height: 38px; padding-left: 9px; flex: none; }
.qat { display: flex; align-items: center; gap: 15px; flex: none; width: 802px; }
.qat .undo { margin: 0 -6px 0 -2px; }
.qat .undo ~ .undo { margin-left: -7px; }
.qat .more { margin-left: 3px; }
.doc-title { color: #6f6f6f; width: 70px; padding-top: 2px; flex: none; }
.command-search {
  display: flex; align-items: center; gap: 6px;
  width: 225px; height: 30px; padding: 0 8px;
  border: 1px solid #8a8a8a; border-radius: 4px; color: #555;
}
.command-search input { flex: 1; min-width: 0; border: 0; outline: 0; padding: 2px 0 0; background: none; }
input::placeholder { color: #767676; font-style: italic; opacity: 1; }

/* ribbon tabs */
.tabs { display: flex; align-items: center; height: 34px; padding-left: 21px; gap: 39px; font-size: 16px; flex: none; }
.tab { height: 32px; line-height: 28px; border-bottom: 4px solid transparent; padding-top: 2px; }
.tab.active { font-weight: 600; border-color: #0079d0; margin-left: 5px; }
.context-tabs {
  display: flex; gap: 39px; height: 31px; padding: 0 19px; margin-left: 6px;
  background: #fff; border: 1px solid #dedede; border-radius: 4px;
}
.context-tabs + .context-tabs { margin-left: -13px; }
.context-tabs .tab { height: 29px; line-height: 25px; border: 0; }

/* ribbon */
.ribbon { display: flex; height: 118px; padding-top: 3px; border-bottom: 1px solid #c3c3c3; flex: none; }
.group { position: relative; display: flex; flex-direction: column; flex: none; padding-left: 12px; }
.group::after { content: ""; position: absolute; right: 0; top: 0; bottom: 5px; width: 1px; background: #b8b8b8; }
.cmds { display: flex; gap: 10px; height: 94px; }
.group-name { text-align: center; margin-left: -12px; font-size: 13px; color: #555; }
.g-clipboard { width: 135px; }
.g-clipboard .cmds { padding-left: 2px; }
.g-model { width: 406px; }
.g-model .cmds { gap: 11px; }
.g-model .group-name { margin-right: 24px; }
.g-view { width: 189px; }
.g-view .cmds, .g-insert .cmds { gap: 9px; }
.g-mode { width: 115px; }
.g-run { width: 221px; }
.g-insert { width: 285px; }
.g-group { width: 136px; }
.big { position: relative; display: flex; flex-direction: column; align-items: center; padding-top: 3px; text-align: center; }
.ico { display: flex; align-items: center; justify-content: center; height: 42px; margin-bottom: 2px; }
.drop { margin-top: 5px; color: #555; }
.stack { display: flex; flex-direction: column; }
.small { display: flex; align-items: center; gap: 5px; height: 30px; }
.side { color: #555; margin-left: 5px; }
button:disabled { color: #9a9a9a; }
.icon-grid { display: grid; grid-template-columns: 20px 20px; grid-auto-rows: 30px; column-gap: 7px; }
.launcher { position: absolute; right: 4px; bottom: 4px; }

/* workspace */
.workspace { display: flex; flex: 1; background: #ebebeb; padding-top: 8px; min-height: 0; }
.dock { width: 40px; flex: none; }
.dock-tab {
  writing-mode: vertical-rl; height: 52px; width: 29px; padding: 0;
  border-left: 7px solid #bfc1c5; color: #555; text-align: left;
}

.contents { width: 233px; flex: none; background: #f8f8f8; border: 1px solid #d3d3d3; border-bottom: 0; border-radius: 4px 4px 0 0; }
.pane-title { display: flex; align-items: center; gap: 11px; height: 41px; padding: 0 7px 0 8px; }
.pane-title h2 { flex: 1; font-size: 19px; line-height: 24px; font-weight: 400; }
.search-row { display: flex; align-items: center; gap: 9px; padding: 0 5px 0 4px; height: 30px; }
.search { display: flex; align-items: center; flex: 1; min-width: 0; gap: 13px; height: 30px; padding: 0 6px 0 7px; background: #fff; border: 1px solid #8a8a8a; color: #555; }
.search input { flex: 1; min-width: 0; border: 0; outline: 0; padding: 0; background: none; }
.list-tabs { display: flex; margin: 10px 0 0 19px; height: 43px; }
.list-tab { display: flex; justify-content: center; width: 40px; padding-top: 2px; border-bottom: 2px solid #d9d9d9; }
.list-tab.on { border-bottom: 4px solid #0079c8; }
.list-more { align-self: flex-start; padding: 17px 0 0 11px; }
.contents h3 { margin: 15px 0 6px 19px; font-size: 17px; line-height: 24px; font-weight: 600; color: #4a4a4a; }
.tree { list-style: none; color: #4a4a4a; }
.node { display: flex; align-items: center; height: 30px; gap: 6px; }
.node label { display: flex; align-items: center; gap: 6px; flex: 1; height: 30px; white-space: nowrap; }
.node .selected { background: #c3daec; border: 1px solid #1b7fc0; margin: 0 1px 0 -3px; padding-left: 2px; }
.lvl0 { padding-left: 3px; }
.lvl1 { padding-left: 17px; }
.lvl2 { padding-left: 31px; }
.layer { margin-top: 4px; }
.twist { width: 8px; height: 8px; background: #666; clip-path: polygon(100% 0, 100% 100%, 0 100%); }
.node input { appearance: none; flex: none; width: 18px; height: 18px; margin: 2px 0 0; background: #fff; border: 1px solid #777; border-radius: 3px; display: grid; place-items: center; }
.node input:checked::before { content: ""; width: 6px; height: 11px; border: solid #444; border-width: 0 2px 2px 0; transform: rotate(42deg) translate(-1px, -1px); }
.legend { padding-left: 35px; }
.legend.deep { padding-left: 49px; }
.legend h4 { height: 28px; line-height: 27px; font-weight: 600; font-size: 14px; }
.legend p { display: flex; align-items: center; gap: 9px; height: 24px; padding-left: 3px; white-space: nowrap; }
.sw { width: 21px; height: 16px; }
.c1 { background: #548b77; }
.c2 { background: #d559ee; }
.c3 { background: #f35853; }
.c4 { background: #f5ea58; }
.c5 { background: #6e96f0; }
.r1 { background: #a50026; }
.r2 { background: #f98e52; }
.r3 { background: #ffffbf; }
.r4 { background: #86cb67; }
.r5 { background: #006837; }

/* document panes */
.map-pane { display: flex; flex-direction: column; width: 662px; flex: none; margin: 0 8px; }
.doc-tabs { display: flex; align-items: center; justify-content: space-between; height: 31px; border-bottom: 3px solid #d3d5d8; padding-right: 4px; }
.doc-tab { display: flex; align-items: center; gap: 6px; height: 28px; padding: 2px 7px 0 8px; background: #d3d5d8; border-radius: 4px 4px 0 0; color: #444; }
.doc-tab .icon-btn { margin-left: 6px; }
.map-view { flex: 1; background: #fff; border: solid #d3d5d8; border-width: 0 1px; padding: 26px 8px; min-height: 0; }
.map-status { display: flex; gap: 11px; height: 1px; padding-left: 7px; background: #f8f8f8; }
.scale-edge { width: 125px; background: #8a8a8a; }
.tool-edge { width: 25px; background: #1b4f80; }

.model-pane { display: flex; flex-direction: column; flex: 1; min-width: 0; background: #f9f9f9; }
.model-pane .doc-tabs { background: #ebebeb; border-color: #0079d0; }
.model-pane .doc-tab { background: #0079d0; color: #fff; gap: 7px; }
.model-pane .doc-tab .icon-btn { color: #fff; }
.toolbar { display: flex; align-items: center; gap: 11px; height: 41px; padding-left: 9px; background: #ebebeb; overflow: hidden; flex: none; }
.toolbar .icon-btn { gap: 6px; }
.text-btn { display: flex; align-items: center; gap: 4px; }
.bar { width: 1px; height: 36px; margin: 0 -1px; background: #c6c6c6; flex: none; }

.canvas { position: relative; flex: 1; overflow: hidden; border-left: 1px solid #d3d3d3; min-height: 0; }
.edges { position: absolute; left: 0; top: 0; }
.mnode {
  position: absolute; display: flex; align-items: center; justify-content: center; text-align: center;
  width: 167px; height: 107px; color: #111;
  font: 20px/23px "Liberation Sans", Arial, sans-serif;
}
.oval { border-radius: 50%; }
.box { border-radius: 18px; background: #f2e27b; }
.shadow { box-shadow: 4px 3px 0 #999; }
.blue { background: #71accb; }
.green { background: #84cd7d; }
.sky { background: #80c8ec; }
.red { background: #f00; }
.n-pmap { left: 192px; top: 30px; }
.n-reclassify { left: 91px; top: 170px; }
.n-getprops { left: 292px; top: 170px; }
.n-reclass { left: 91px; top: 311px; }
.n-property { left: 292px; top: 311px; }
.n-calc { left: 91px; top: 451px; }
.n-band { left: 91px; top: 592px; }

.dialog {
  position: absolute; left: 308px; top: 438px; width: 281px; height: 200px;
  background: #f8f8f8; border: 1px solid #a9a9a9; border-radius: 9px;
  box-shadow: 0 22px 44px rgba(0, 0, 0, .36), 0 0 50px rgba(0, 0, 0, .1);
}
.dialog header { display: flex; justify-content: space-between; padding-left: 10px; height: 30px; }
.dialog h2 { font-size: 17px; line-height: 32px; font-weight: 400; color: #0a78b8; }
.dlg-close { display: flex; align-items: center; justify-content: center; width: 33px; height: 30px; background: #c3dbee; color: #1a6fae; }
.field { display: flex; flex-direction: column; padding: 16px 13px 0 25px; }
.field label { color: #c3c6c8; line-height: 20px; }
.field input { height: 27px; width: 100%; padding: 0 6px; background: #edf0f1; border: 1px solid #b5babd; color: #444; outline: 0; }
.actions { display: flex; justify-content: flex-end; padding: 61px 12px 0 0; }
.ok { width: 92px; height: 31px; background: #fff; border: 1px solid #444; color: #333; }
.scribble { position: absolute; left: 298px; top: 465px; }

.scrollbar { display: flex; align-items: center; gap: 55px; height: 21px; margin-bottom: 6px; padding-left: 8px; background: #ebebeb; flex: none; }
.thumb { flex: 1; height: 11px; background: #b3b3b3; border-radius: 6px 0 0 6px; }
```
